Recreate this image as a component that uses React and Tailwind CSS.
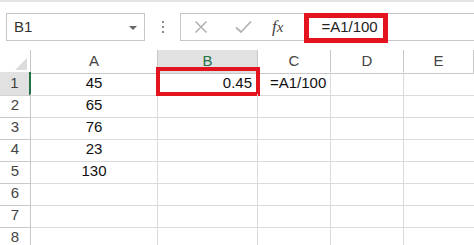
const COLS = ["A", "B", "C", "D", "E"];
const VALUES = { 1: "45", 2: "65", 3: "76", 4: "23", 5: "130" };

/* ===== Toolbar ===== */
const FormulaBar = () => (
  <div className="flex items-start h-[48px] pt-[11px]">
    {/* Name box */}
    <div className="ml-[6px] w-[139px] h-[28px] border border-[#c6c6c6] flex items-center justify-between pl-[7px] pr-[7px]">
      <span className="text-[15px] text-[#333]">B1</span>
      <span className="w-0 h-0 border-l-[4px] border-r-[4px] border-t-[4px] border-l-transparent border-r-transparent border-t-[#666] mt-[1px]" />
    </div>

    {/* Dots */}
    <div className="w-[35px] h-[28px] flex flex-col items-center justify-center gap-[3px]">
      <span className="w-[2px] h-[2px] bg-[#8a8a8a]" />
      <span className="w-[2px] h-[2px] bg-[#8a8a8a]" />
      <span className="w-[2px] h-[2px] bg-[#8a8a8a]" />
    </div>

    {/* Formula input */}
    <div className="flex-1 h-[28px] border border-r-0 border-[#c6c6c6] flex items-center relative">
      <svg width="14" height="14" viewBox="0 0 14 14" className="ml-[13px]">
        <path d="M1.5 1.5 L12.5 12.5 M12.5 1.5 L1.5 12.5" stroke="#b3b3b3" strokeWidth="1.6" fill="none" />
      </svg>
      <svg width="17" height="14" viewBox="0 0 17 14" className="ml-[27px]">
        <path d="M1 7.5 L6 12 L16 1.5" stroke="#b3b3b3" strokeWidth="1.8" fill="none" />
      </svg>
      <span
        className="ml-[20px] text-[17px] italic text-[#444]"
        style={{ fontFamily: '"Liberation Serif", serif' }}
      >
        f<span className="text-[15px]">x</span>
      </span>
      <span className="ml-[26px] text-[15px] text-[#222] pl-[12px]">=A1/100</span>

      {/* red highlight */}
      <div className="absolute left-[123px] -top-[1px] w-[84px] h-[30px] border-[5px] border-[#e3141f]" />
    </div>
  </div>
);

/* ===== Sheet ===== */
const HeaderRow = () => (
  <div className="grid grid-cols-[31px_127px_100px_73px_73px_1fr] h-[22px]">
    <div className="border-r border-b border-[#c8c8c8] flex items-end justify-end pr-[3px] pb-[3px]">
      <svg width="12" height="12" viewBox="0 0 12 12">
        <path d="M12 0 L12 12 L0 12 Z" fill="#dcdcdc" />
      </svg>
    </div>
    {COLS.map((c) => (
      <div
        key={c}
        className={
          c === "B"
            ? "bg-[#e1e1e1] border-r border-b border-[#c8c8c8] flex items-center justify-center text-[15px] text-[#217346]"
            : "border-r border-b border-[#c8c8c8] flex items-center justify-center text-[15px] text-[#444]"
        }
      >
        {c}
      </div>
    ))}
  </div>
);

const Row = ({ n }) => (
  <div className="grid grid-cols-[31px_127px_100px_73px_73px_1fr] h-[22px]">
    <div
      className={
        n === 1
          ? "bg-[#e1e1e1] border-r-2 border-b border-[#d4d4d4] border-r-[#217346] flex items-center justify-center text-[15px] text-[#444]"
          : "border-r border-b border-[#c8c8c8] flex items-center justify-center text-[15px] text-[#444]"
      }
    >
      {n}
    </div>
    <div className="border-r border-b border-[#dadada] flex items-center justify-center text-[15px] text-[#111]">
      {VALUES[n] ?? ""}
    </div>
    <div className="border-r border-b border-[#dadada] flex items-center justify-end pr-[5px] text-[15px] text-[#111] relative">
      {n === 1 && (
        <>
          0.45
          <div className="absolute -left-[2px] -top-[5px] -right-[3px] -bottom-[1px] border-4 border-[#e3141f]" />
        </>
      )}
    </div>
    <div className="border-r border-b border-[#dadada] flex items-center pl-[12px] text-[15px] text-[#111]">
      {n === 1 ? "=A1/100" : ""}
    </div>
    <div className="border-r border-b border-[#dadada]" />
    <div className="border-b border-[#dadada]" />
  </div>
);

const App = () => {
  return (
    <div
      className="w-[474px] h-[245px] bg-white overflow-hidden"
      style={{ fontFamily: '"Liberation Sans", Arial, sans-serif' }}
    >
      <div className="h-[2px] bg-[#e3e3e3]" />
      <FormulaBar />
      <HeaderRow />
      {[1, 2, 3, 4, 5, 6, 7, 8].map((n) => (
        <Row key={n} n={n} />
      ))}
    </div>
  );
};

export default App;
